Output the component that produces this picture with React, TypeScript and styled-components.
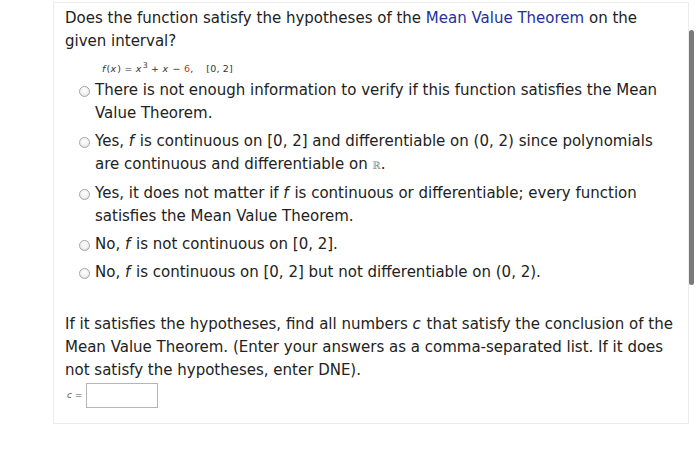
import React from 'react'
import styled, { createGlobalStyle } from 'styled-components'

const GlobalStyle = createGlobalStyle`
  body {
    margin: 0;
    background: #ffffff;
    font-family: 'DejaVu Sans', Verdana, sans-serif;
    color: #222222;
  }
`

const Var = styled.i`
  padding-right: 1px;
`

const options = [
  <>There is not enough information to verify if this function satisfies the Mean Value Theorem.</>,
  <>
    Yes, <Var>f</Var> is continuous on [0, 2] and differentiable on (0, 2) since polynomials are
    continuous and differentiable on <Reals>ℝ</Reals>.
  </>,
  <>
    Yes, it does not matter if <Var>f</Var> is continuous or differentiable; every function
    satisfies the Mean Value Theorem.
  </>,
  <>
    No, <Var>f</Var> is not continuous on [0, 2].
  </>,
  <>
    No, <Var>f</Var> is continuous on [0, 2] but not differentiable on (0, 2).
  </>,
]

function Reals({ children }: { children: React.ReactNode }) {
  return <RealsText>{children}</RealsText>
}

const Page = styled.div`
  position: relative;
  width: 700px;
  height: 455px;
  padding: 2px 0 0 53px;
  box-sizing: border-box;
  overflow: hidden;
`

const Card = styled.div`
  width: 636px;
  height: 422px;
  box-sizing: border-box;
  border: 1px solid #ededed;
  padding: 4px 10px 0 11px;
  font-size: 15px;
  line-height: 23px;
`

const Question = styled.p`
  margin: 0;
`

const Link = styled.span`
  color: #24309e;
`

const Formula = styled.div`
  font-size: 9.5px;
  line-height: 12px;
  color: #333;
  padding: 7px 0 4px 37px;
  letter-spacing: 0.2px;
`

const Red = styled.span`
  color: #c0392b;
`

const OptionList = styled.div`
  display: flex;
  flex-direction: column;
  gap: 5px;
  padding-left: 14px;
`

const Option = styled.label`
  display: flex;
  align-items: flex-start;
  gap: 5px;
`

const Radio = styled.span`
  flex: none;
  width: 11px;
  height: 11px;
  margin-top: 7px;
  border-radius: 50%;
  border: 1px solid #a5a5a5;
  background: radial-gradient(circle at 50% 35%, #ffffff 0%, #f1f1f1 55%, #d8d8d8 100%);
  box-sizing: border-box;
`

const OptionText = styled.span`
  flex: 1;
`

const RealsText = styled.span`
  font-family: 'DejaVu Serif', serif;
  font-size: 10px;
  color: #888;
`

const Followup = styled.p`
  margin: 29px 0 0;
`

const AnswerRow = styled.div`
  display: flex;
  align-items: center;
  margin-top: 1px;
`

const AnswerLabel = styled.span`
  font-size: 9px;
  color: #555;
  font-style: italic;
  padding: 0 4px 0 2px;
`

const AnswerBox = styled.div`
  width: 72px;
  height: 25px;
  box-sizing: border-box;
  border: 1px solid #b5b5b5;
  background: #fff;
`

const ScrollThumb = styled.div`
  position: absolute;
  left: 689px;
  top: 30px;
  width: 5px;
  height: 255px;
  border-radius: 3px;
  background: #7a7a7a;
`

export default function App() {
  return (
    <Page>
      <GlobalStyle />
      <Card>
        <Question>
          Does the function satisfy the hypotheses of the <Link>Mean Value Theorem</Link> on the
          given interval?
        </Question>
        <Formula>
          <Var>f</Var>(<Var>x</Var>) = <Var>x</Var>
          <sup>3</sup> + <Var>x</Var> − <Red>6</Red>,&nbsp;&nbsp;&nbsp; [0, 2]
        </Formula>
        <OptionList>
          {options.map((text, i) => (
            <Option key={i}>
              <Radio />
              <OptionText>{text}</OptionText>
            </Option>
          ))}
        </OptionList>
        <Followup>
          If it satisfies the hypotheses, find all numbers <Var>c</Var> that satisfy the conclusion
          of the Mean Value Theorem. (Enter your answers as a comma-separated list. If it does not
          satisfy the hypotheses, enter DNE).
        </Followup>
        <AnswerRow>
          <AnswerLabel>c =</AnswerLabel>
          <AnswerBox />
        </AnswerRow>
      </Card>
      <ScrollThumb />
    </Page>
  )
}
